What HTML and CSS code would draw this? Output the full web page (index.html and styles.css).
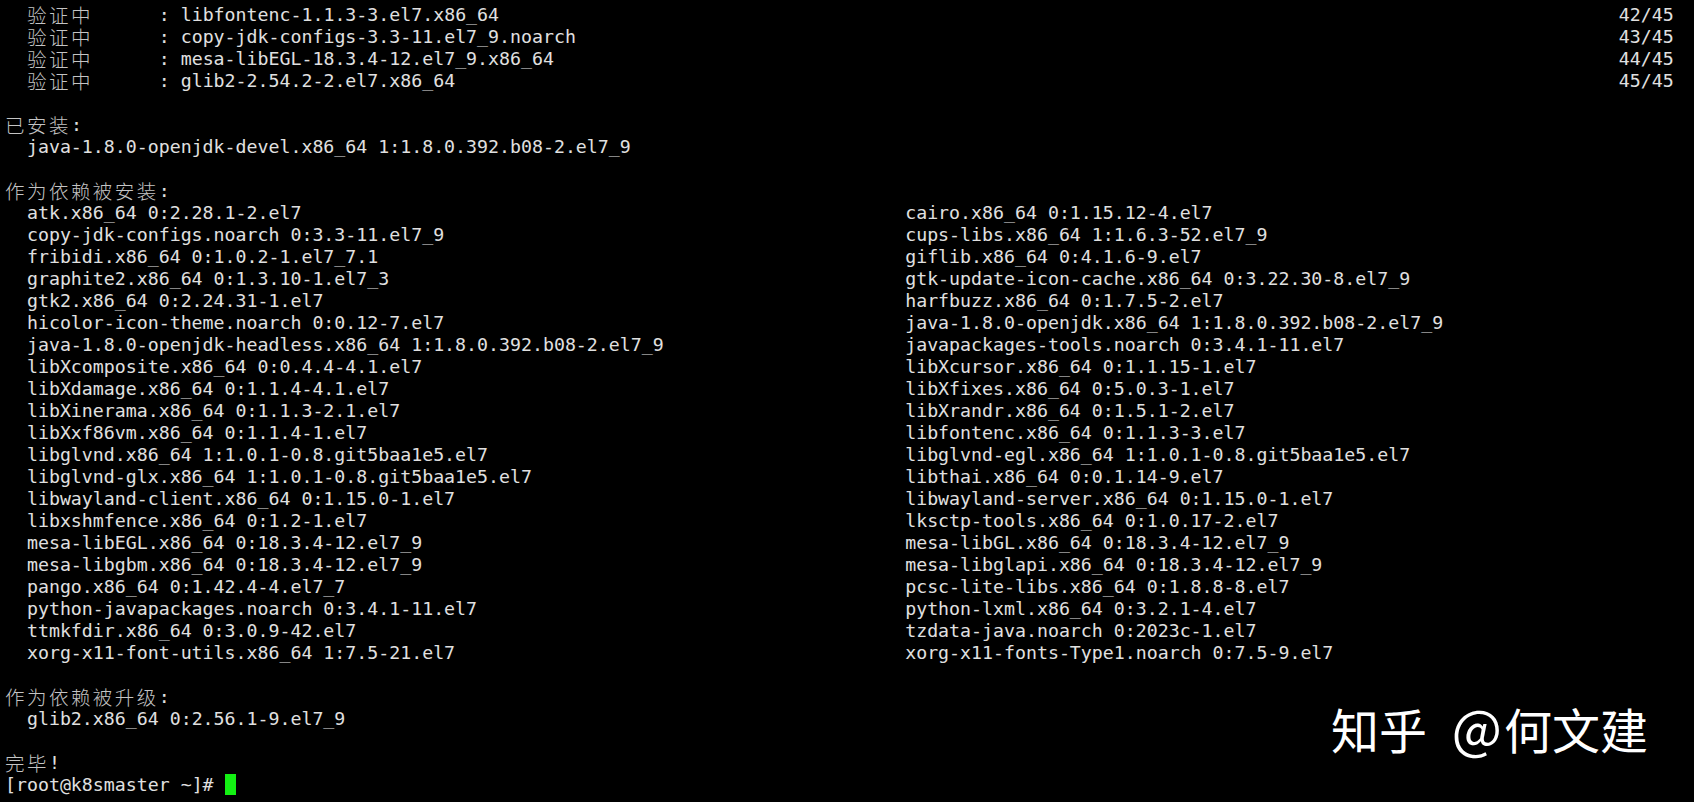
FILE: index.html
```html
<!DOCTYPE html>
<html lang="zh-CN">
<head>
<meta charset="utf-8">
<title>yum install java-1.8.0-openjdk-devel</title>
<link rel="stylesheet" href="styles.css">
</head>
<body>
<div class="term">
  <div class="row split"><span>  <span class="cjk">验证中</span>      : libfontenc-1.1.3-3.el7.x86_64</span><span>42/45</span></div>
  <div class="row split"><span>  <span class="cjk">验证中</span>      : copy-jdk-configs-3.3-11.el7_9.noarch</span><span>43/45</span></div>
  <div class="row split"><span>  <span class="cjk">验证中</span>      : mesa-libEGL-18.3.4-12.el7_9.x86_64</span><span>44/45</span></div>
  <div class="row split"><span>  <span class="cjk">验证中</span>      : glib2-2.54.2-2.el7.x86_64</span><span>45/45</span></div>
  <div class="row"></div>
  <div class="row"><span class="cjk">已安装</span>:</div>
  <div class="row">  java-1.8.0-openjdk-devel.x86_64 1:1.8.0.392.b08-2.el7_9</div>
  <div class="row"></div>
  <div class="row"><span class="cjk">作为依赖被安装</span>:</div>
  <div class="pairs">
    <div class="row">atk.x86_64 0:2.28.1-2.el7</div><div class="row">cairo.x86_64 0:1.15.12-4.el7</div>
    <div class="row">copy-jdk-configs.noarch 0:3.3-11.el7_9</div><div class="row">cups-libs.x86_64 1:1.6.3-52.el7_9</div>
    <div class="row">fribidi.x86_64 0:1.0.2-1.el7_7.1</div><div class="row">giflib.x86_64 0:4.1.6-9.el7</div>
    <div class="row">graphite2.x86_64 0:1.3.10-1.el7_3</div><div class="row">gtk-update-icon-cache.x86_64 0:3.22.30-8.el7_9</div>
    <div class="row">gtk2.x86_64 0:2.24.31-1.el7</div><div class="row">harfbuzz.x86_64 0:1.7.5-2.el7</div>
    <div class="row">hicolor-icon-theme.noarch 0:0.12-7.el7</div><div class="row">java-1.8.0-openjdk.x86_64 1:1.8.0.392.b08-2.el7_9</div>
    <div class="row">java-1.8.0-openjdk-headless.x86_64 1:1.8.0.392.b08-2.el7_9</div><div class="row">javapackages-tools.noarch 0:3.4.1-11.el7</div>
    <div class="row">libXcomposite.x86_64 0:0.4.4-4.1.el7</div><div class="row">libXcursor.x86_64 0:1.1.15-1.el7</div>
    <div class="row">libXdamage.x86_64 0:1.1.4-4.1.el7</div><div class="row">libXfixes.x86_64 0:5.0.3-1.el7</div>
    <div class="row">libXinerama.x86_64 0:1.1.3-2.1.el7</div><div class="row">libXrandr.x86_64 0:1.5.1-2.el7</div>
    <div class="row">libXxf86vm.x86_64 0:1.1.4-1.el7</div><div class="row">libfontenc.x86_64 0:1.1.3-3.el7</div>
    <div class="row">libglvnd.x86_64 1:1.0.1-0.8.git5baa1e5.el7</div><div class="row">libglvnd-egl.x86_64 1:1.0.1-0.8.git5baa1e5.el7</div>
    <div class="row">libglvnd-glx.x86_64 1:1.0.1-0.8.git5baa1e5.el7</div><div class="row">libthai.x86_64 0:0.1.14-9.el7</div>
    <div class="row">libwayland-client.x86_64 0:1.15.0-1.el7</div><div class="row">libwayland-server.x86_64 0:1.15.0-1.el7</div>
    <div class="row">libxshmfence.x86_64 0:1.2-1.el7</div><div class="row">lksctp-tools.x86_64 0:1.0.17-2.el7</div>
    <div class="row">mesa-libEGL.x86_64 0:18.3.4-12.el7_9</div><div class="row">mesa-libGL.x86_64 0:18.3.4-12.el7_9</div>
    <div class="row">mesa-libgbm.x86_64 0:18.3.4-12.el7_9</div><div class="row">mesa-libglapi.x86_64 0:18.3.4-12.el7_9</div>
    <div class="row">pango.x86_64 0:1.42.4-4.el7_7</div><div class="row">pcsc-lite-libs.x86_64 0:1.8.8-8.el7</div>
    <div class="row">python-javapackages.noarch 0:3.4.1-11.el7</div><div class="row">python-lxml.x86_64 0:3.2.1-4.el7</div>
    <div class="row">ttmkfdir.x86_64 0:3.0.9-42.el7</div><div class="row">tzdata-java.noarch 0:2023c-1.el7</div>
    <div class="row">xorg-x11-font-utils.x86_64 1:7.5-21.el7</div><div class="row">xorg-x11-fonts-Type1.noarch 0:7.5-9.el7</div>
  </div>
  <div class="row"></div>
  <div class="row"><span class="cjk">作为依赖被升级</span>:</div>
  <div class="row">  glib2.x86_64 0:2.56.1-9.el7_9</div>
  <div class="row"></div>
  <div class="row"><span class="cjk">完毕</span>!</div>
  <div class="row">[root@k8smaster ~]# <span class="cursor"></span></div>
</div>
<div class="watermark">知乎 <span class="at">@</span>何文建</div>
</body>
</html>
```

FILE: styles.css
```css
html, body {
  margin: 0;
  padding: 0;
  background: #000;
  width: 1694px;
  height: 802px;
  overflow: hidden;
}

.term {
  padding: 4px 0 0 5px;
  font-family: "DejaVu Sans Mono", monospace;
  font-size: 18.24px;
  line-height: 22px;
  color: #e0e0e0;
}

.row {
  height: 22px;
  white-space: pre;
}

.split {
  display: flex;
  justify-content: space-between;
  width: 152ch;
}

.pairs {
  display: grid;
  grid-template-columns: 80ch auto;
  padding-left: 2ch;
}

.cjk {
  display: inline-block;
  height: 22px;
  vertical-align: top;
  font-family: "Noto Sans CJK SC", sans-serif;
  font-size: 19.5px;
  line-height: 22px;
  letter-spacing: 2.46px;
  color: #c4c4c4;
  font-weight: 300;
}

.cursor {
  display: inline-block;
  width: 1ch;
  height: 21px;
  background: #13f013;
  vertical-align: top;
}

.watermark {
  position: absolute;
  left: 1331px;
  top: 702px;
  font-family: "Noto Sans CJK SC", sans-serif;
  font-size: 48px;
  line-height: 48px;
  word-spacing: 14px;
  color: #fff;
  white-space: pre;
}

.at {
  font-size: 53px;
  margin-right: 2px;
}
```
